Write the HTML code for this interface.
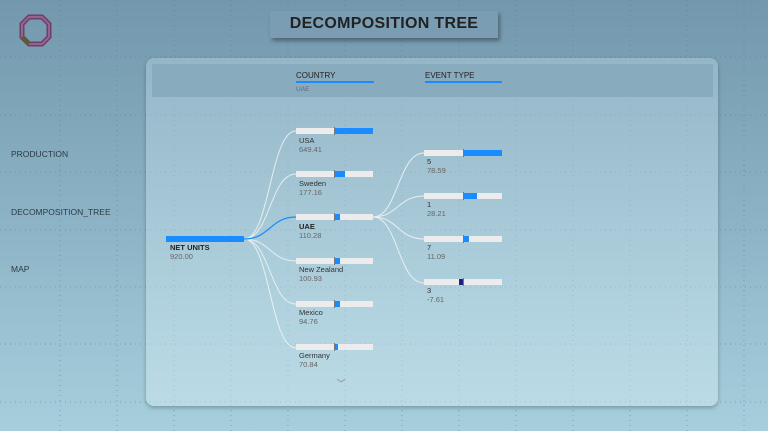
<!DOCTYPE html>
<html><head><meta charset="utf-8"><style>
*{margin:0;padding:0;box-sizing:border-box}
body{width:768px;height:431px;overflow:hidden;position:relative;font-family:"Liberation Sans",sans-serif;
background:linear-gradient(180deg,#7398ad 0%,#86adc0 40%,#a6cfdd 100%);}
.t{position:absolute;white-space:nowrap}
.panel{position:absolute;left:146px;top:58px;width:572px;height:348px;border-radius:8px;
background:linear-gradient(180deg,rgba(200,225,235,.35),rgba(215,238,245,.45));box-shadow:0 2px 4px rgba(0,0,0,.25)}
.hdr{position:absolute;left:152px;top:64px;width:561px;height:33px;background:#88abbe}
.bar{position:absolute;height:6px;background:#ececec}
.bar i{position:absolute;top:0;height:6px;background:#1a8cff}
.bar b{position:absolute;top:-1px;width:1px;height:8px;background:#777}
.n{font-size:7.5px;color:#333}
.v{font-size:7.5px;color:#666}
.lab{font-size:8.5px;color:#2c3a44;left:11px}
</style></head><body>
<svg width="768" height="431" style="position:absolute;left:0;top:0">
<g stroke="#5a7a90" stroke-width="1" stroke-dasharray="1 4" opacity=".55">
<line x1="60" y1="0" x2="60" y2="431"/><line x1="117" y1="0" x2="117" y2="431"/><line x1="174" y1="0" x2="174" y2="431"/><line x1="231" y1="0" x2="231" y2="431"/><line x1="288" y1="0" x2="288" y2="431"/><line x1="345" y1="0" x2="345" y2="431"/><line x1="402" y1="0" x2="402" y2="431"/><line x1="459" y1="0" x2="459" y2="431"/><line x1="516" y1="0" x2="516" y2="431"/><line x1="573" y1="0" x2="573" y2="431"/><line x1="630" y1="0" x2="630" y2="431"/><line x1="687" y1="0" x2="687" y2="431"/><line x1="744" y1="0" x2="744" y2="431"/>
<line x1="0" y1="57" x2="768" y2="57"/><line x1="0" y1="115" x2="768" y2="115"/><line x1="0" y1="172" x2="768" y2="172"/><line x1="0" y1="230" x2="768" y2="230"/><line x1="0" y1="287" x2="768" y2="287"/><line x1="0" y1="344" x2="768" y2="344"/><line x1="0" y1="402" x2="768" y2="402"/>
</g>
<polygon points="29,17 42,17 49,24 49,37 42,44 29,44 22,37 22,24" fill="none" stroke="#6e3e6c" stroke-width="5"/>
<polygon points="29,17 42,17 49,24 49,37 42,44 29,44 22,37 22,24" fill="none" stroke="#93658c" stroke-width="2"/>
<path d="M22 37 L29 44" stroke="#5e5840" stroke-width="5"/>
</svg>
<div style="position:absolute;left:270px;top:11px;width:228px;height:27px;background:#7b9db3;box-shadow:2px 3px 4px rgba(0,0,0,.35)"></div>
<div class="t" style="left:270px;width:228px;top:15px;text-align:center;font-size:16px;font-weight:bold;color:#222;letter-spacing:.3px">DECOMPOSITION TREE</div>
<div class="t lab" style="top:149px">PRODUCTION</div>
<div class="t lab" style="top:207px">DECOMPOSITION_TREE</div>
<div class="t lab" style="top:264px">MAP</div>
<div class="panel"></div>
<div class="hdr"></div>
<div class="t" style="left:296px;top:71px;font-size:8px;color:#222">COUNTRY</div>
<div style="position:absolute;left:296px;top:81px;width:78px;height:2px;background:#1a8cff"></div>
<div class="t" style="left:296px;top:86px;font-size:6.5px;color:#667">UAE</div>
<div class="t" style="left:425px;top:71px;font-size:8px;color:#222">EVENT TYPE</div>
<div style="position:absolute;left:425px;top:81px;width:77px;height:2px;background:#1a8cff"></div>
<svg width="768" height="431" style="position:absolute;left:0;top:0">
<g fill="none" stroke="#f2f6f8" stroke-width="1" opacity=".85">
<path d="M244 239 C270 239 270 131 296 131"/>
<path d="M244 239 C270 239 270 174 296 174"/>
<path d="M244 239 C270 239 270 261 296 261"/>
<path d="M244 239 C270 239 270 304 296 304"/>
<path d="M244 239 C270 239 270 348 296 348"/>
<path d="M373 217 C398 217 398 153 424 153"/>
<path d="M373 217 C398 217 398 196 424 196"/>
<path d="M373 217 C398 217 398 239 424 239"/>
<path d="M373 217 C398 217 398 283 424 283"/>
</g>
<path d="M244 239 C270 239 270 217 296 217" fill="none" stroke="#1a8cff" stroke-width="1.2"/>
<path d="M337 379 l4 3 l4 -3" fill="none" stroke="#999" stroke-width="1"/>
</svg>
<div class="bar" style="left:166px;top:236px;width:78px;background:#1a8cff"></div>
<div class="t n" style="left:170px;top:243px;font-weight:bold;color:#222">NET UNITS</div>
<div class="t v" style="left:170px;top:252px">920.00</div>

<div class="bar" style="left:296px;top:128px;width:77px"><i style="left:38px;width:39px"></i><b style="left:38px"></b></div>
<div class="t n" style="left:299px;top:136px">USA</div><div class="t v" style="left:299px;top:145px">649.41</div>
<div class="bar" style="left:296px;top:171px;width:77px"><i style="left:38px;width:11px"></i><b style="left:38px"></b></div>
<div class="t n" style="left:299px;top:179px">Sweden</div><div class="t v" style="left:299px;top:188px">177.16</div>
<div class="bar" style="left:296px;top:214px;width:77px"><i style="left:38px;width:6px"></i><b style="left:38px"></b></div>
<div class="t n" style="left:299px;top:222px;font-weight:bold;color:#222">UAE</div><div class="t v" style="left:299px;top:231px">110.28</div>
<div class="bar" style="left:296px;top:258px;width:77px"><i style="left:38px;width:6px"></i><b style="left:38px"></b></div>
<div class="t n" style="left:299px;top:265px">New Zealand</div><div class="t v" style="left:299px;top:274px">100.93</div>
<div class="bar" style="left:296px;top:301px;width:77px"><i style="left:38px;width:6px"></i><b style="left:38px"></b></div>
<div class="t n" style="left:299px;top:308px">Mexico</div><div class="t v" style="left:299px;top:317px">94.76</div>
<div class="bar" style="left:296px;top:344px;width:77px"><i style="left:38px;width:4px"></i><b style="left:38px"></b></div>
<div class="t n" style="left:299px;top:351px">Germany</div><div class="t v" style="left:299px;top:360px">70.84</div>

<div class="bar" style="left:424px;top:150px;width:78px"><i style="left:39px;width:39px"></i><b style="left:39px"></b></div>
<div class="t n" style="left:427px;top:157px">5</div><div class="t v" style="left:427px;top:166px">78.59</div>
<div class="bar" style="left:424px;top:193px;width:78px"><i style="left:39px;width:14px"></i><b style="left:39px"></b></div>
<div class="t n" style="left:427px;top:200px">1</div><div class="t v" style="left:427px;top:209px">28.21</div>
<div class="bar" style="left:424px;top:236px;width:78px"><i style="left:39px;width:6px"></i><b style="left:39px"></b></div>
<div class="t n" style="left:427px;top:243px">7</div><div class="t v" style="left:427px;top:252px">11.09</div>
<div class="bar" style="left:424px;top:279px;width:78px"><i style="left:35px;width:4px;background:#1a237e"></i><b style="left:39px"></b></div>
<div class="t n" style="left:427px;top:286px">3</div><div class="t v" style="left:427px;top:295px">-7.61</div>
</body></html>
